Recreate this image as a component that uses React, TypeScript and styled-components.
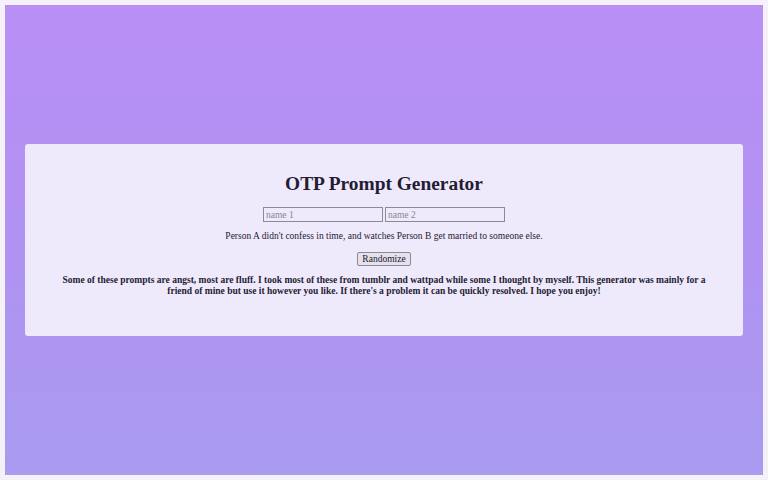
import styled, { createGlobalStyle } from 'styled-components';

const GlobalStyle = createGlobalStyle`
  html, body {
    margin: 0;
    height: 100%;
    background: #f4f2f8;
  }

  body {
    padding: 5px;
    box-sizing: border-box;
    font-family: "Liberation Serif", "Times New Roman", serif;
    color: #1f1a2e;
  }

  #root {
    height: 100%;
  }
`;

function App() {
  return (
    <>
      <GlobalStyle />
      <Backdrop>
        <Card>
          <Title>OTP Prompt Generator</Title>

          <Names>
            <NameInput placeholder="name 1" />
            <NameInput placeholder="name 2" />
          </Names>

          <Prompt>Person A didn't confess in time, and watches Person B get married to someone else.</Prompt>

          <RandomButton>Randomize</RandomButton>

          <Note>
            Some of these prompts are angst, most are fluff. I took most of these from tumblr and wattpad while some I
            thought by myself. This generator was mainly for a friend of mine but use it however you like. If there's a
            problem it can be quickly resolved. I hope you enjoy!
          </Note>
        </Card>
      </Backdrop>
    </>
  );
}

export default App;

const Backdrop = styled.div`
  height: 100%;
  display: flex;
  align-items: center;
  padding: 0 20px;
  box-sizing: border-box;
  background: linear-gradient(180deg, #b98ff6 0%, #b192f2 50%, #a99bf0 100%);
`;

const Card = styled.div`
  flex: 1;
  height: 192px;
  box-sizing: border-box;
  padding: 28px 34px 0;
  display: flex;
  flex-direction: column;
  align-items: center;
  background: #efe9fc;
  border-radius: 3px;
`;

const Title = styled.h1`
  margin: 0;
  font-size: 19.4px;
  line-height: 24px;
  font-weight: 700;
  color: #231d33;
`;

const Names = styled.div`
  display: flex;
  gap: 2px;
  margin-top: 11px;
`;

const NameInput = styled.input`
  width: 120px;
  height: 15px;
  box-sizing: border-box;
  padding: 0 2px;
  font-family: "Liberation Serif", serif;
  font-size: 9.5px;
  border: 1px solid #8c8a94;
  background: transparent;
  color: #333;

  &::placeholder {
    color: #8a8690;
  }

  &:focus {
    outline: none;
  }
`;

const Prompt = styled.p`
  margin: 9px 0 0;
  font-size: 9.5px;
  line-height: 11px;
  color: #1f1a2e;
`;

const RandomButton = styled.button`
  margin-top: 10px;
  height: 14px;
  padding: 0 4px;
  font-family: "Liberation Serif", serif;
  font-size: 9.5px;
  line-height: 12px;
  color: #1f1a2e;
  background: #e4e0ec;
  border: 1px solid #8c8a94;
  border-radius: 2px;
`;

const Note = styled.p`
  margin: 9px 0 0;
  font-size: 9.5px;
  line-height: 11px;
  font-weight: 700;
  text-align: center;
  color: #231d33;
`;
